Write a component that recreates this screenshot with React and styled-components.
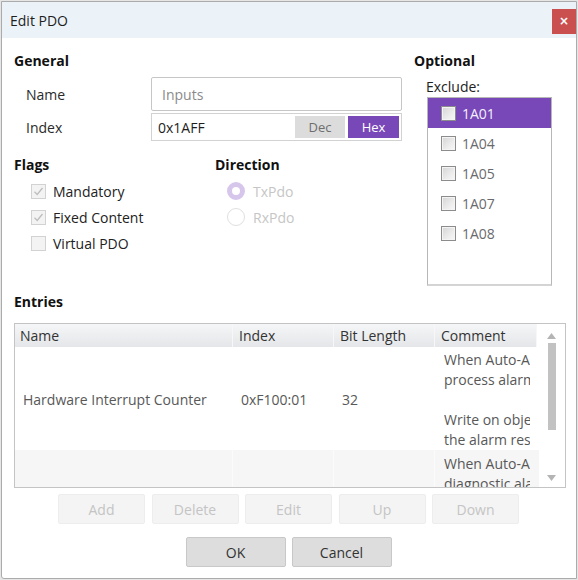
import React from 'react';
import styled, { createGlobalStyle } from 'styled-components';

const Global = createGlobalStyle`
  html, body { margin: 0; padding: 0; background: #e6e6e6; }
  body {
    width: 578px; height: 580px; overflow: hidden;
    font-family: "Open Sans", "Noto Sans", sans-serif;
  }
  * { box-sizing: border-box; }
`;

const Window = styled.div`
  margin: 1px 0 0 1px;
  width: 576px;
  height: 578px;
  border: 1px solid #ababab;
  border-radius: 0 0 0 3px;
  background: #fff;
  display: flex;
  flex-direction: column;
  color: #222;
  font-size: 14px;
  overflow: hidden;
`;

const TitleBar = styled.div`
  height: 36px;
  flex: none;
  background: #ecf3f8;
  display: flex;
  align-items: flex-start;
  justify-content: space-between;
  padding-left: 8px;
`;

const Title = styled.span`
  font-size: 14px;
  color: #1e1e1e;
  line-height: 20px;
  margin-top: 9px;
`;

const CloseButton = styled.button`
  width: 24px;
  height: 25px;
  margin-top: 7px;
  border: none;
  background: #c9504f;
  color: #fff;
  font-family: "DejaVu Sans", sans-serif;
  font-weight: 700;
  font-size: 12px;
  line-height: 25px;
  padding: 0;
  display: flex;
  align-items: center;
  justify-content: center;
`;

const Content = styled.div`
  flex: 1;
  padding: 13px 10px 0 12px;
  display: flex;
  flex-direction: column;
`;

const TopGrid = styled.div`
  display: grid;
  grid-template-columns: 388px 1fr;
  column-gap: 13px;
`;

const Column = styled.div`
  display: flex;
  flex-direction: column;
`;

const Heading = styled.div`
  font-weight: 700;
  font-size: 14px;
  line-height: 20px;
  color: #111;
  margin-top: ${p => p.$mt || 0}px;
  margin-left: ${p => p.$ml || 0}px;
`;

const FieldGrid = styled.div`
  margin-top: 6px;
  padding-left: 12px;
  display: grid;
  grid-template-columns: 125px 251px;
  grid-template-rows: 34px 28px;
  row-gap: 2px;
  align-items: center;
`;

const FieldLabel = styled.span`
  color: #2a2a2a;
  line-height: 20px;
  padding-top: 1px;
`;

const TextBox = styled.div`
  height: 100%;
  border: 1px solid #c6c6c6;
  border-radius: 2px;
  padding-left: 10px;
  display: flex;
  align-items: center;
  color: ${p => (p.$placeholder ? '#8a8a8a' : '#222')};
`;

const IndexBox = styled.div`
  height: 100%;
  border: 1px solid #d2d2d2;
  padding: 2px 2px 2px 6px;
  display: flex;
  align-items: center;
  gap: 3px;
`;

const IndexValue = styled.span`
  flex: 1;
  color: #1e1e1e;
`;

const BaseButton = styled.div`
  width: ${p => p.$w}px;
  height: 100%;
  display: flex;
  align-items: center;
  justify-content: center;
  font-size: 13px;
  background: ${p => (p.$active ? '#7847b8' : '#dcdcdc')};
  color: ${p => (p.$active ? '#fff' : '#6e6e6e')};
`;

const FlagsGrid = styled.div`
  margin-top: 14px;
  display: grid;
  grid-template-columns: 201px 1fr;
`;

const OptionList = styled.div`
  margin-top: 3px;
  padding-left: 17px;
  display: flex;
  flex-direction: column;
`;

const OptionRow = styled.div`
  height: 26px;
  display: flex;
  align-items: center;
  gap: 7px;
  color: ${p => (p.$dim ? '#c6c6c6' : '#222')};
`;

const FlagBox = styled.span`
  width: 15px;
  height: 15px;
  border: 1px solid #d2d2d2;
  background: #f3f3f3;
  display: flex;
  align-items: center;
  justify-content: center;
`;

const Radio = styled.span`
  width: 18px;
  height: 18px;
  border-radius: 50%;
  border: ${p => (p.$checked ? '5px solid #d6c6ec' : '1px solid #e0e0e0')};
  background: #fff;
  margin-left: -5px;
  margin-right: 1px;
`;

const ExcludeLabel = styled.div`
  margin: 6px 0 0 11px;
  line-height: 20px;
  color: #222;
`;

const ExcludeList = styled.div`
  margin-left: 12px;
  width: 125px;
  height: 189px;
  border: 1px solid #b7b7b7;
  border-bottom: 2px solid #d4d4d4;
  display: flex;
  flex-direction: column;
`;

const ExcludeItem = styled.div`
  height: 30px;
  flex: none;
  display: flex;
  align-items: center;
  padding-left: 13px;
  gap: 6px;
  background: ${p => (p.$selected ? '#7847b8' : 'transparent')};
  color: ${p => (p.$selected ? '#f4f0fa' : '#6a6a6e')};
`;

const ClassicBox = styled.span`
  width: 15px;
  height: 15px;
  border: 1px solid #8c8c8c;
  box-shadow: inset 0 0 0 1px #f4f4f4;
  background: linear-gradient(135deg, #d4d4d4 0%, #ececec 60%, #f8f8f8 100%);
`;

const Table = styled.div`
  margin-top: 11px;
  height: 165px;
  border: 1px solid #c4c4c4;
  display: flex;
  overflow: hidden;
`;

const TableMain = styled.div`
  flex: 1;
  display: flex;
  flex-direction: column;
  overflow: hidden;
`;

const RowGrid = styled.div`
  display: grid;
  grid-template-columns: 218px 101px 101px 102px;
  flex: none;
  height: ${p => p.$h}px;
  background: ${p => p.$bg || '#fff'};
`;

const HeaderCell = styled.div`
  background: linear-gradient(#f5f6f7, #e4e6e9);
  border-right: 1px solid #f7f7f7;
  padding-left: ${p => p.$pl || 6}px;
  display: flex;
  align-items: center;
  color: #333;
  font-size: 14px;
`;

const Cell = styled.div`
  padding-left: 8px;
  padding-top: 2px;
  display: flex;
  align-items: center;
  color: #585858;
  border-right: 1px solid ${p => p.$line || 'transparent'};
  overflow: hidden;
  white-space: nowrap;
`;

const CommentCell = styled.div`
  padding: ${p => p.$pt}px 7px 0 9px;
  line-height: 20px;
  color: #585858;
  overflow: hidden;
  white-space: pre;
`;

const CommentClip = styled.div`
  overflow: hidden;
`;

const ScrollColumn = styled.div`
  width: 26px;
  flex: none;
  display: flex;
  flex-direction: column;
  align-items: center;
  padding: 9px 1px 6px 0;
  background: #fff;
`;

const Thumb = styled.div`
  width: 8px;
  height: 87px;
  margin-top: 4px;
  background: #c2c2c2;
`;

const Spacer = styled.div`
  flex: 1;
`;

const ButtonRow = styled.div`
  margin-top: ${p => p.$mt}px;
  padding-right: 3px;
  display: flex;
  justify-content: center;
  gap: ${p => p.$gap}px;
`;

const ActionButton = styled.div`
  width: 87px;
  height: 30px;
  background: #f4f4f4;
  border: 1px solid #ededed;
  border-radius: 2px;
  color: #c4c4c4;
  display: flex;
  align-items: center;
  justify-content: center;
`;

const DialogButton = styled.div`
  width: 100px;
  height: 30px;
  background: #dddddd;
  border: 1px solid #c8c8c8;
  border-radius: 2px;
  color: #333;
  display: flex;
  align-items: center;
  justify-content: center;
`;

const Check = ({ color }) => (
  <svg width="11" height="11" viewBox="0 0 11 11">
    <path d="M1.5 5.8 L4.2 8.5 L9.5 2" fill="none" stroke={color} strokeWidth="1.3" />
  </svg>
);

const Arrow = ({ up }) => (
  <svg width="9" height="6" viewBox="0 0 9 6">
    <path d={up ? 'M0 6 L4.5 0 L9 6 Z' : 'M0 0 L4.5 6 L9 0 Z'} fill="#b4b4b4" />
  </svg>
);

const flags = [
  { label: 'Mandatory', checked: true },
  { label: 'Fixed Content', checked: true },
  { label: 'Virtual PDO', checked: false },
];

const excludes = ['1A01', '1A04', '1A05', '1A07', '1A08'];

const actions = ['Add', 'Delete', 'Edit', 'Up', 'Down'];

export default function App() {
  return (
    <>
      <Global />
      <Window>
        <TitleBar>
          <Title>Edit PDO</Title>
          <CloseButton>×</CloseButton>
        </TitleBar>
        <Content>
          <TopGrid>
            <Column>
              <Heading>General</Heading>
              <FieldGrid>
                <FieldLabel>Name</FieldLabel>
                <TextBox $placeholder>Inputs</TextBox>
                <FieldLabel>Index</FieldLabel>
                <IndexBox>
                  <IndexValue>0x1AFF</IndexValue>
                  <BaseButton $w={50}>Dec</BaseButton>
                  <BaseButton $w={51} $active>Hex</BaseButton>
                </IndexBox>
              </FieldGrid>
              <FlagsGrid>
                <Column>
                  <Heading>Flags</Heading>
                  <OptionList>
                    {flags.map(f => (
                      <OptionRow key={f.label}>
                        <FlagBox>{f.checked && <Check color="#bdbdbd" />}</FlagBox>
                        {f.label}
                      </OptionRow>
                    ))}
                  </OptionList>
                </Column>
                <Column>
                  <Heading>Direction</Heading>
                  <OptionList>
                    <OptionRow $dim>
                      <Radio $checked />
                      TxPdo
                    </OptionRow>
                    <OptionRow $dim>
                      <Radio />
                      RxPdo
                    </OptionRow>
                  </OptionList>
                </Column>
              </FlagsGrid>
            </Column>
            <Column>
              <Heading $ml={-1}>Optional</Heading>
              <ExcludeLabel>Exclude:</ExcludeLabel>
              <ExcludeList>
                {excludes.map((e, i) => (
                  <ExcludeItem key={e} $selected={i === 0}>
                    <ClassicBox />
                    {e}
                  </ExcludeItem>
                ))}
              </ExcludeList>
            </Column>
          </TopGrid>

          <Heading $mt={6}>Entries</Heading>
          <Table>
            <TableMain>
              <RowGrid $h={23}>
                <HeaderCell $pl={5}>Name</HeaderCell>
                <HeaderCell>Index</HeaderCell>
                <HeaderCell>Bit Length</HeaderCell>
                <HeaderCell>Comment</HeaderCell>
              </RowGrid>
              <RowGrid $h={103}>
                <Cell>Hardware Interrupt Counter</Cell>
                <Cell>0xF100:01</Cell>
                <Cell>32</Cell>
                <CommentCell $pt={3}>
                  <CommentClip>
                    {'When Auto-Acknowledge is off the\nprocess alarms are counted here\n\nWrite on object to acknowledge\nthe alarm reset'}
                  </CommentClip>
                </CommentCell>
              </RowGrid>
              <RowGrid $h={40} $bg="#f6f6f6">
                <Cell $line="#fbfbfb" />
                <Cell $line="#fbfbfb" />
                <Cell $line="#fbfbfb" />
                <CommentCell $pt={4}>
                  <CommentClip>
                    {'When Auto-Acknowledge is off the\ndiagnostic alarms are counted here'}
                  </CommentClip>
                </CommentCell>
              </RowGrid>
            </TableMain>
            <ScrollColumn>
              <Arrow up />
              <Thumb />
              <Spacer />
              <Arrow />
            </ScrollColumn>
          </Table>

          <ButtonRow $mt={6} $gap={6.5}>
            {actions.map(a => (
              <ActionButton key={a}>{a}</ActionButton>
            ))}
          </ButtonRow>
          <ButtonRow $mt={13} $gap={6}>
            <DialogButton>OK</DialogButton>
            <DialogButton>Cancel</DialogButton>
          </ButtonRow>
        </Content>
      </Window>
    </>
  );
}
